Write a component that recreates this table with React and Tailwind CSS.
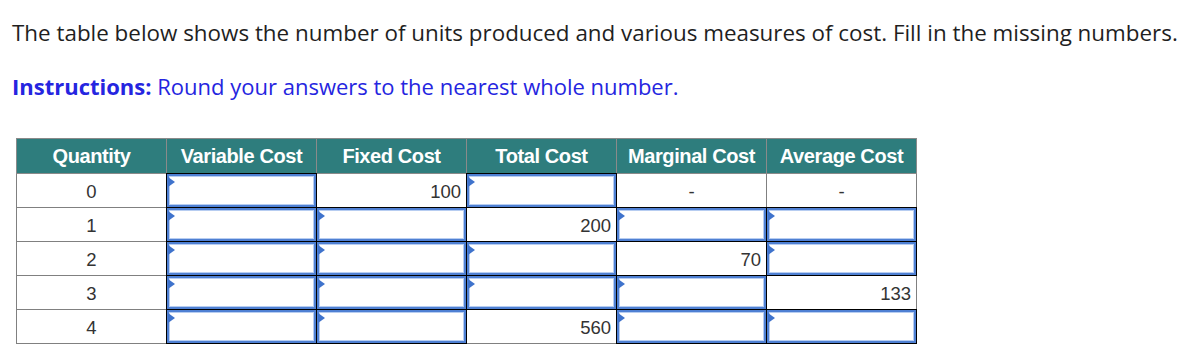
import React from "react";

const columns = [
  "Quantity",
  "Variable Cost",
  "Fixed Cost",
  "Total Cost",
  "Marginal Cost",
  "Average Cost",
];

// null = answer box, string = given value
const rows = [
  ["0", null, "100", null, "-", "-"],
  ["1", null, null, "200", null, null],
  ["2", null, null, null, "70", null],
  ["3", null, null, null, null, "133"],
  ["4", null, null, "560", null, null],
];

function AnswerCell() {
  return (
    <td className="p-0 border border-[#808080] align-top">
      <div className="relative -m-px h-[35px] border border-black">
        <input
          type="text"
          className="block w-full h-full border-2 border-[#4f80d3] shadow-[inset_0_0_0_1px_#b7cdf1] bg-white outline-none px-2 text-[18px]"
        />
        <span className="absolute left-px top-[3px] w-0 h-0 border-y-[5px] border-y-transparent border-l-[7px] border-l-[#3f73cc]" />
      </div>
    </td>
  );
}

function ValueCell({ value, idx }) {
  const align = idx === 0 || value === "-" ? "text-center" : "text-right";
  return (
    <td
      className={`border border-[#808080] h-[34px] px-[5px] pt-[2px] text-[18.5px] text-[#333] ${align}`}
    >
      {value}
    </td>
  );
}

export default function App() {
  return (
    <div
      className="bg-white w-[1177px] h-[356px] overflow-hidden pl-[12px] pt-[19px]"
      style={{ fontFamily: "'Open Sans', Lato, sans-serif" }}
    >
      <p className="text-[22.4px] leading-[28px] text-[#1f1f1f] whitespace-nowrap">
        The table below shows the number of units produced and various
        measures of cost. Fill in the missing numbers.
      </p>
      <p className="mt-[25px] text-[22px] leading-[28px] text-[#2525e0] whitespace-nowrap">
        <span className="font-bold">Instructions:</span> Round your answers to
        the nearest whole number.
      </p>

      <table
        className="mt-[38px] ml-[4px] border-collapse table-fixed"
        style={{ fontFamily: "'Liberation Sans', Arial, sans-serif" }}
      >
        <colgroup>
          {columns.map((c) => (
            <col key={c} className="w-[150px]" />
          ))}
        </colgroup>
        <thead>
          <tr className="bg-[#2e7d7d]">
            {columns.map((c) => (
              <th
                key={c}
                className="border border-[#8a8a8a] h-[35px] text-white font-bold text-[20px] tracking-[-0.4px] text-center"
              >
                {c}
              </th>
            ))}
          </tr>
        </thead>
        <tbody>
          {rows.map((row, r) => (
            <tr key={r}>
              {row.map((cell, i) =>
                cell === null ? (
                  <AnswerCell key={i} />
                ) : (
                  <ValueCell key={i} value={cell} idx={i} />
                )
              )}
            </tr>
          ))}
        </tbody>
      </table>
    </div>
  );
}
